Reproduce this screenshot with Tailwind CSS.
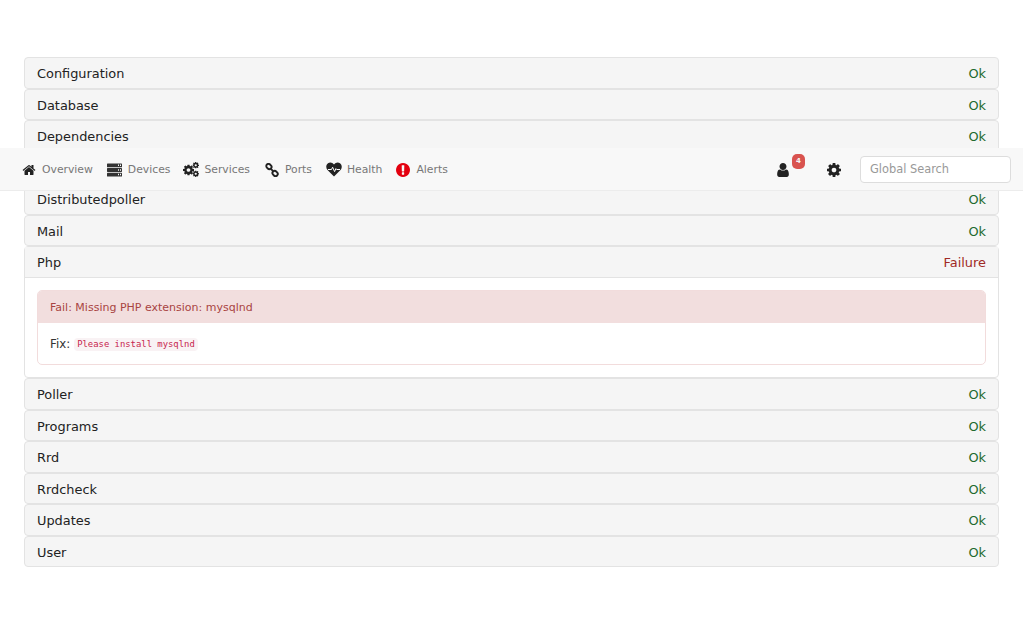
<!DOCTYPE html>
<html>
<head>
<meta charset="utf-8">
<script src="https://cdn.jsdelivr.net/npm/@tailwindcss/browser@4"></script>
</head>
<body class="bg-white font-['DejaVu_Sans',sans-serif] text-[#333] h-[624px] overflow-hidden relative">
<svg class="hidden"><defs>
<path id="cog" d="M1152 896q0-106-75-181t-181-75-181 75-75 181 75 181 181 75 181-75 75-181zm512-109v222q0 12-8 23t-20 13l-185 28q-19 54-39 91 35 50 107 138 10 12 10 25t-9 23q-27 37-99 108t-94 71q-12 0-26-9l-138-108q-44 23-91 38-16 136-29 186-7 28-36 28h-222q-14 0-24.500-8.500t-11.500-21.500l-28-184q-49-16-90-37l-141 107q-10 9-25 9-14 0-25-11-126-114-165-168-7-10-7-23 0-12 8-23 15-21 51-66.500t54-70.500q-27-50-41-99l-183-27q-13-2-21-12.500t-8-23.500v-222q0-12 8-23t19-13l186-28q14-46 39-92-40-57-107-138-10-12-10-24 0-10 9-23 26-36 98.500-107.500t94.500-71.500q13 0 26 10l138 107q44-23 91-38 16-136 29-186 7-28 36-28h222q14 0 24.500 8.500t11.500 21.500l28 184q49 16 90 37l142-107q9-9 24-9 13 0 25 10 129 119 165 170 7 8 7 22 0 12-8 23-15 21-51 66.500t-54 70.500q26 50 41 98l183 28q13 2 21 12.500t8 23.500z"/>
</defs></svg>

<main class="pt-[57.400px] pl-6 w-[999px] flex flex-col text-[12.9px] leading-[20px] text-[#222]">
  <div class="h-[31.5px] flex items-center justify-between px-3 pt-[2px] bg-[#f5f5f5] border border-[#e3e3e3] rounded"><span>Configuration</span><span class="text-[#1f6b2e]">Ok</span></div>
  <div class="h-[31.5px] flex items-center justify-between px-3 pt-[2px] bg-[#f5f5f5] border border-[#e3e3e3] rounded"><span>Database</span><span class="text-[#1f6b2e]">Ok</span></div>
  <div class="h-[31.5px] flex items-center justify-between px-3 pt-[2px] bg-[#f5f5f5] border border-[#e3e3e3] rounded"><span>Dependencies</span><span class="text-[#1f6b2e]">Ok</span></div>
  <div class="h-[31.5px] bg-[#f5f5f5] border border-[#e3e3e3] rounded"></div>
  <div class="h-[31.5px] flex items-center justify-between px-3 pt-[2px] bg-[#f5f5f5] border border-[#e3e3e3] rounded"><span>Distributedpoller</span><span class="text-[#1f6b2e]">Ok</span></div>
  <div class="h-[31.5px] flex items-center justify-between px-3 pt-[2px] bg-[#f5f5f5] border border-[#e3e3e3] rounded"><span>Mail</span><span class="text-[#1f6b2e]">Ok</span></div>
  <div class="border border-[#e3e3e3] rounded bg-white">
    <div class="h-[31px] flex items-center justify-between px-3 pt-[2px] bg-[#f5f5f5] border-b border-[#e3e3e3]"><span>Php</span><span class="text-[#a02a25]">Failure</span></div>
    <div class="p-3 h-[99px]">
      <div class="border border-[#f2dcdc] rounded-[5px] text-[11px] overflow-hidden h-[75px]">
        <div class="h-[32px] flex items-center px-3 pt-[1px] bg-[#f2dede] text-[#a94442]">Fail: Missing PHP extension: mysqlnd</div>
        <div class="h-[42px] flex items-center px-3 gap-[4px] text-[#333]"><span class="text-[11.8px]">Fix:</span><code class="font-['DejaVu_Sans_Mono',monospace] text-[8.9px] leading-[13px] text-[#c7254e] bg-[#f9f2f4] rounded px-[3px]">Please install mysqlnd</code></div>
      </div>
    </div>
  </div>
  <div class="h-[31.5px] flex items-center justify-between px-3 pt-[2px] bg-[#f5f5f5] border border-[#e3e3e3] rounded"><span>Poller</span><span class="text-[#1f6b2e]">Ok</span></div>
  <div class="h-[31.5px] flex items-center justify-between px-3 pt-[2px] bg-[#f5f5f5] border border-[#e3e3e3] rounded"><span>Programs</span><span class="text-[#1f6b2e]">Ok</span></div>
  <div class="h-[31.5px] flex items-center justify-between px-3 pt-[2px] bg-[#f5f5f5] border border-[#e3e3e3] rounded"><span>Rrd</span><span class="text-[#1f6b2e]">Ok</span></div>
  <div class="h-[31.5px] flex items-center justify-between px-3 pt-[2px] bg-[#f5f5f5] border border-[#e3e3e3] rounded"><span>Rrdcheck</span><span class="text-[#1f6b2e]">Ok</span></div>
  <div class="h-[31.5px] flex items-center justify-between px-3 pt-[2px] bg-[#f5f5f5] border border-[#e3e3e3] rounded"><span>Updates</span><span class="text-[#1f6b2e]">Ok</span></div>
  <div class="h-[31.5px] flex items-center justify-between px-3 pt-[2px] bg-[#f5f5f5] border border-[#e3e3e3] rounded"><span>User</span><span class="text-[#1f6b2e]">Ok</span></div>
</main>

<nav class="absolute left-0 top-[148px] w-full h-[43px] bg-[#f8f8f8] border-b border-[#ececec] flex items-center pl-[22px] pr-3 text-[10.8px] text-[#777]">
  <a class="flex items-center gap-[6px] mt-[1px]">
    <svg class="w-[14px] h-[14px]" viewBox="0 0 1792 1792" fill="#222"><path d="M1472 992v480q0 26-19 45t-45 19h-384v-384h-256v384h-384q-26 0-45-19t-19-45v-480q0-1 .5-3t.5-3l575-474 575 474q1 2 1 6zm223-69l-62 74q-8 9-21 11h-3q-13 0-21-7l-692-577-692 577q-12 8-24 7-13-2-21-11l-62-74q-8-10-7-23.500t11-21.500l719-599q32-26 76-26t76 26l244 204v-195q0-14 9-23t23-9h192q14 0 23 9t9 23v408l219 182q10 8 11 21.500t-7 23.500z"/></svg>
    <span class="pt-[1px]">Overview</span></a>
  <a class="flex items-center gap-[6px] ml-[14px] mt-[1px]">
    <svg class="w-[15px] h-[14px]" viewBox="0 0 15 14" fill="#333"><rect x="0" y="0.500" width="15" height="3.800" rx="0.600"/><rect x="0" y="5.100" width="15" height="3.800" rx="0.600"/><rect x="0" y="9.700" width="15" height="3.800" rx="0.600"/><path d="M11 1.500h1v1.500h-1zM13 1.500h1v1.500h-1zM11 6.200h1v1.500h-1zM13 6.200h1v1.500h-1zM11 10.800h1v1.500h-1zM13 10.800h1v1.500h-1z" fill="#f8f8f8"/></svg>
    <span class="pt-[1px]">Devices</span></a>
  <a class="flex items-center gap-[5px] ml-[13px] mt-[1px]">
    <svg class="w-[16px] h-[15px]" viewBox="0 0 16 15" fill="#222"><svg x="0" y="2.500" width="11" height="11" viewBox="128 128 1536 1536"><use href="#cog"/></svg><svg x="9.500" y="0" width="6.500" height="6.500" viewBox="128 128 1536 1536"><use href="#cog"/></svg><svg x="9.500" y="8.500" width="6.500" height="6.500" viewBox="128 128 1536 1536"><use href="#cog"/></svg></svg>
    <span class="pt-[1px]">Services</span></a>
  <a class="flex items-center gap-[6px] ml-[15px] mt-[1px]">
    <svg class="w-[14px] h-[14px]" viewBox="0 0 14 14" fill="none" stroke="#222" stroke-width="1.900"><rect x="1.100" y="1.300" width="5.600" height="4.400" rx="2.200" transform="rotate(45 3.900 3.500)"/><rect x="7.300" y="8.300" width="5.600" height="4.400" rx="2.200" transform="rotate(45 10.100 10.500)"/><path d="M5.800 5.800L8.200 8.200"/></svg>
    <span class="pt-[1px]">Ports</span></a>
  <a class="flex items-center gap-[5px] ml-[14px] mt-[1px]">
    <svg class="w-[16px] h-[15px]" viewBox="0 0 16 15"><path d="M8 14.500L1.500 8C-.5 5.800.1 2.600 2 1.300 4-.1 6.600.6 8 2.500 9.400.6 12-.1 14 1.300c1.900 1.300 2.500 4.500.5 6.700z" fill="#222"/><path d="M2 7.500h3.500l1.100-2.300 2 4.400 1.300-3 .8.900H14" fill="none" stroke="#f8f8f8" stroke-width="1"/></svg>
    <span class="pt-[1px]">Health</span></a>
  <a class="flex items-center gap-[6px] ml-[14px] mt-[1px]">
    <svg class="w-[14px] h-[14px]" viewBox="128 128 1536 1536" fill="#e3000f"><path d="M896 128q209 0 385.500 103t279.500 279.500 103 385.500-103 385.500-279.500 279.500-385.500 103-385.500-103-279.500-279.500-103-385.500 103-385.500 279.500-279.500 385.500-103zm128 1247v-190q0-14-9-23.500t-22-9.500h-192q-13 0-23 10t-10 23v190q0 13 10 23t23 10h192q13 0 22-9.500t9-23.500zm-2-344l18-621q0-12-10-18-10-8-24-8h-220q-14 0-24 8-10 6-10 18l17 621q0 10 10 17.500t24 7.500h185q14 0 23.500-7.500t10.500-17.500z"/></svg>
    <span class="pt-[1px]">Alerts</span></a>
  <div class="ml-auto flex items-center">
    <div class="relative w-[12px] h-[14px] mr-[38px] mt-[2px]">
      <svg class="block w-[12px] h-[14px]" viewBox="256 128 1280 1536" fill="#222"><path d="M1536 1399q0 109-62.500 187t-150.500 78h-854q-88 0-150.500-78t-62.500-187q0-85 8.500-160.500t31.500-152 58.500-131 94-89 134.500-34.500q131 128 313 128t313-128q76 0 134.500 34.500t94 89 58.500 131 31.500 152 8.500 160.500zm-256-887q0 159-112.500 271.500t-271.500 112.500-271.500-112.500-112.500-271.500 112.500-271.500 271.500-112.500 271.500 112.500 112.500 271.500z"/></svg>
      <span class="absolute left-[15px] top-[-9px] w-[13px] h-[15px] rounded-[5px] bg-[#d9534f] text-[#f5f5f5] text-[7px] font-bold leading-[15px] text-center">4</span>
    </div>
    <svg class="w-[14px] h-[14px] mr-[19px] mt-[2px]" viewBox="128 128 1536 1536" fill="#222"><use href="#cog"/></svg>
    <input class="w-[151px] h-[27px] bg-white border border-[#ddd] rounded px-[9px] text-[11.400px] text-[#555] placeholder:text-[#999]" placeholder="Global Search">
  </div>
</nav>
</body>
</html>
